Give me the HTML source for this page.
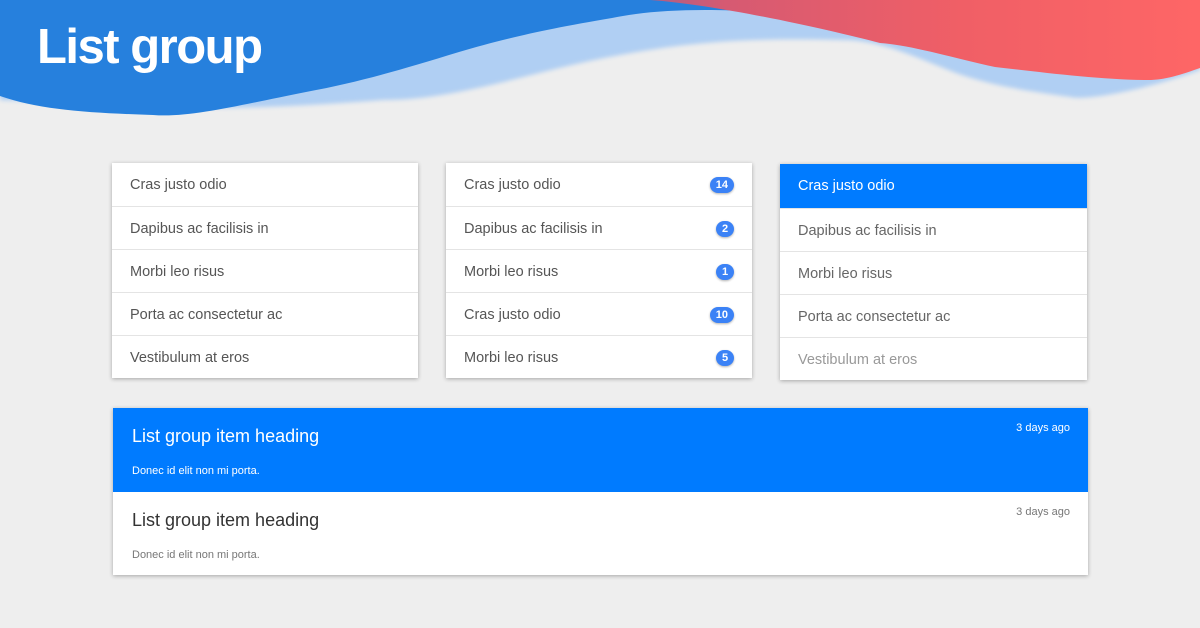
<!DOCTYPE html><html><head><style>
body{margin:0;width:1200px;height:628px;background:#eeeeee;font-family:"Liberation Sans",sans-serif;position:relative;overflow:hidden}
.h{position:absolute;left:37px;top:19px;color:#fff;font-weight:bold;font-size:49px;letter-spacing:-1.5px}
.card{position:absolute;background:#fff;box-shadow:0 1px 4px rgba(0,0,0,.3)}
.row{height:43px;line-height:45px;padding:0 18px;font-size:14.5px;color:#555;border-top:1px solid #e4e4e4;box-sizing:border-box;position:relative}
.row:first-child{border-top:none}
.b{position:absolute;right:18px;top:14px;background:#3b82f6;color:#fff;font-size:11px;font-weight:bold;line-height:16px;height:16px;min-width:10px;padding:0 4px;border-radius:8px;text-align:center;box-shadow:0 1px 2px rgba(0,0,0,.3)}
.b2{padding:0 6px}
.act{background:#007bff;color:#fff}
.sec{position:relative;height:84px;padding:0 18px;box-sizing:border-box}
.sec h4{margin:0;position:absolute;top:18px;left:19px;font-size:18px;font-weight:normal}
.sec p{margin:0;position:absolute;top:57px;left:19px;font-size:11px}
.sec span{position:absolute;right:18px;top:14px;font-size:11px}
</style></head><body>
<svg width="1200" height="130" style="position:absolute;left:0;top:0">
<defs><linearGradient id="r" x1="0" x2="1"><stop offset="0" stop-color="#2a7cd8" stop-opacity="0"/><stop offset=".25" stop-color="#5a6aae"/><stop offset=".5" stop-color="#d65a72"/><stop offset=".75" stop-color="#f05f66"/><stop offset="1" stop-color="#fe6666"/></linearGradient>
<filter id="s"><feGaussianBlur stdDeviation="2"/></filter></defs>
<path d="M0,0H1200V70C1130,95 1080,100 1071,97C1020,90 990,85 956,73C910,55 880,40 842,40C760,38 700,40 620,55C535,70 460,100 383,100C320,105 260,108 200,108L0,100Z" fill="#b0cff3" filter="url(#s)"/>
<path d="M0,0H1200V60C1100,60 1000,55 880,40C830,20 790,12 765,12C700,8 650,10 612,18C540,30 500,40 459,52C400,70 360,82 306,92C240,105 190,118 153,115C90,113 40,110 0,96Z" fill="#2680dd"/>
<path d="M250,0H1200V68C1180,75 1165,80 1148,80C1100,80 1040,72 995,67C950,57 910,45 880,43C830,30 720,5 650,0Z" fill="url(#r)"/>
</svg>
<div class="h">List group</div>
<div class="card" style="left:112px;top:163px;width:306px">
<div class="row">Cras justo odio</div><div class="row">Dapibus ac facilisis in</div><div class="row">Morbi leo risus</div><div class="row">Porta ac consectetur ac</div><div class="row">Vestibulum at eros</div></div>
<div class="card" style="left:446px;top:163px;width:306px">
<div class="row">Cras justo odio<span class="b b2">14</span></div><div class="row">Dapibus ac facilisis in<span class="b">2</span></div><div class="row">Morbi leo risus<span class="b">1</span></div><div class="row">Cras justo odio<span class="b b2">10</span></div><div class="row">Morbi leo risus<span class="b">5</span></div></div>
<div class="card" style="left:780px;top:164px;width:307px">
<div class="row act" style="height:44px;line-height:44px">Cras justo odio</div><div class="row" style="color:#666">Dapibus ac facilisis in</div><div class="row" style="color:#666">Morbi leo risus</div><div class="row" style="color:#666">Porta ac consectetur ac</div><div class="row" style="color:#999">Vestibulum at eros</div></div>
<div class="card" style="left:113px;top:408px;width:975px;height:167px">
<div class="sec act"><h4>List group item heading</h4><p>Donec id elit non mi porta.</p><span>3 days ago</span></div>
<div class="sec" style="height:83px;color:#333"><h4>List group item heading</h4><p style="color:#777">Donec id elit non mi porta.</p><span style="color:#777">3 days ago</span></div>
</div>
</body></html>
